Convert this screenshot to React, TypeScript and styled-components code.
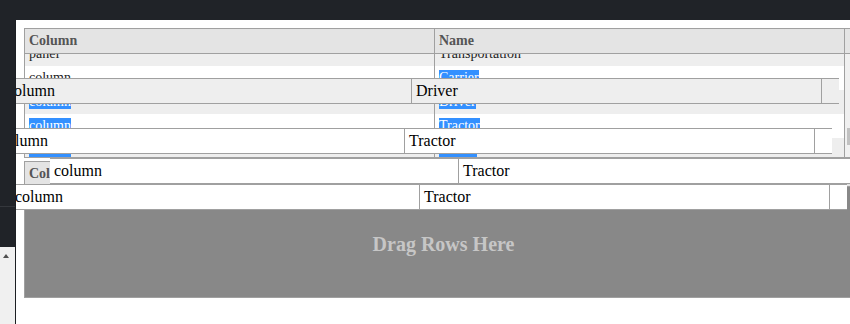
import React from 'react';
import styled, { createGlobalStyle } from 'styled-components';

const GlobalStyle = createGlobalStyle`
  html, body { margin: 0; padding: 0; background: #ffffff; }
  body { font-family: "Liberation Serif", "Times New Roman", serif; }
  * { box-sizing: border-box; }
`;

const Frame = styled.div`
  width: 850px;
  height: 324px;
  display: flex;
  flex-direction: column;
  overflow: hidden;
`;

const TopBar = styled.div`
  height: 20px;
  flex: none;
  background: #202328;
`;

const Main = styled.div`
  flex: 1;
  display: flex;
  min-height: 0;
`;

const Sidebar = styled.div`
  width: 16px;
  flex: none;
  display: flex;
  flex-direction: column;
  border-right: 1px solid #1c1f23;
`;

const SidebarDark = styled.div<{ $h: number }>`
  height: ${(p) => p.$h}px;
  flex: none;
  background: #202328;
`;

const SidebarRule = styled.div`
  height: 1px;
  flex: none;
  background: #34373c;
`;

const SidebarLight = styled.div`
  flex: 1;
  background: #f0f0f0;
  padding: 7px 0 0 3px;
`;

const UpArrow = styled.div`
  width: 0;
  height: 0;
  border-left: 3.5px solid transparent;
  border-right: 3.5px solid transparent;
  border-bottom: 4px solid #505050;
`;

const Content = styled.div`
  flex: 1;
  position: relative;
  overflow: hidden;
  background: #ffffff;
  padding: 8px;
  display: flex;
  flex-direction: column;
  align-items: flex-start;
`;

const Grid = styled.div<{ $gap?: number }>`
  width: 839px;
  flex: none;
  border: 1px solid #a0a0a0;
  margin-top: ${(p) => p.$gap ?? 0}px;
  display: flex;
  flex-direction: column;
`;

const HeaderRow = styled.div`
  display: flex;
  height: 25px;
  flex: none;
  background: #e4e4e4;
  border-bottom: 1px solid #a0a0a0;
`;

const HeaderCell = styled.div<{ $w: number; $last?: boolean }>`
  width: ${(p) => p.$w}px;
  flex: none;
  border-right: ${(p) => (p.$last ? 'none' : '1px solid #a0a0a0')};
  padding-left: 4px;
  font-weight: bold;
  font-size: 14px;
  line-height: 24px;
  color: #555555;
  white-space: nowrap;
  overflow: hidden;
`;

const GridBody = styled.div`
  height: 103px;
  display: flex;
  overflow: hidden;
`;

const RowsViewport = styled.div`
  width: 820px;
  flex: none;
  overflow: hidden;
`;

const RowsScroller = styled.div`
  margin-top: -12px;
`;

const Row = styled.div<{ $alt: boolean }>`
  display: flex;
  height: 24px;
  background: ${(p) => (p.$alt ? '#eeeeee' : '#ffffff')};
`;

const Cell = styled.div`
  width: 410px;
  flex: none;
  border-right: 1px solid #a0a0a0;
  padding-left: 4px;
  font-size: 14px;
  line-height: 24px;
  color: #222222;
  white-space: nowrap;
  overflow: hidden;
`;

const Selected = styled.span`
  background: #3390ff;
  color: #ffffff;
`;

const Scrollbar = styled.div`
  width: 17px;
  flex: none;
  background: #f0f0f0;
  padding: 74px 0 0 2px;
`;

const Thumb = styled.div`
  width: 13px;
  height: 17px;
  background: #c1c1c1;
`;

const DropZone = styled.div`
  height: 110px;
  background: #888888;
  display: flex;
  align-items: center;
  justify-content: center;
  padding-top: 4px;
  font-weight: bold;
  font-size: 20px;
  color: #c6c6c6;
`;

const GhostRow = styled.div<{ $x: number; $y: number; $alt?: boolean }>`
  position: absolute;
  left: ${(p) => p.$x}px;
  top: ${(p) => p.$y}px;
  display: flex;
  height: 26px;
  border-top: 1px solid #a0a0a0;
  border-bottom: 1px solid #a0a0a0;
  background: ${(p) => (p.$alt ? '#eeeeee' : '#ffffff')};
  z-index: 2;
`;

const GhostCell = styled.div<{ $w: number; $last?: boolean }>`
  width: ${(p) => p.$w}px;
  flex: none;
  border-right: ${(p) => (p.$last ? 'none' : '1px solid #a0a0a0')};
  padding-left: 4px;
  font-size: 16px;
  line-height: 24px;
  color: #000000;
  white-space: nowrap;
  overflow: hidden;
`;

type GridRow = { col: string; name: string; selCol: boolean; selName: boolean };

const rows: GridRow[] = [
  { col: 'panel', name: 'Transportation', selCol: false, selName: false },
  { col: 'column', name: 'Carrier', selCol: false, selName: true },
  { col: 'column', name: 'Driver', selCol: true, selName: true },
  { col: 'column', name: 'Tractor', selCol: true, selName: true },
  { col: 'column', name: 'Trailer', selCol: true, selName: true },
];

type Ghost = { x: number; y: number; alt: boolean; name: string };

// drag ghosts, positioned where the pointer left them (content-area coordinates)
const ghosts: Ghost[] = [
  { x: -13, y: 58, alt: true, name: 'Driver' },
  { x: -20, y: 108, alt: false, name: 'Tractor' },
  { x: 34, y: 138, alt: false, name: 'Tractor' },
  { x: -5, y: 164, alt: false, name: 'Tractor' },
];

const Text = ({ children, sel }: { children: string; sel: boolean }) =>
  sel ? <Selected>{children}</Selected> : <>{children}</>;

export default function App() {
  return (
    <>
      <GlobalStyle />
      <Frame>
        <TopBar />
        <Main>
          <Sidebar>
            <SidebarDark $h={186} />
            <SidebarRule />
            <SidebarDark $h={40} />
            <SidebarLight>
              <UpArrow />
            </SidebarLight>
          </Sidebar>
          <Content>
            <Grid>
              <HeaderRow>
                <HeaderCell $w={410}>Column</HeaderCell>
                <HeaderCell $w={410}>Name</HeaderCell>
                <HeaderCell $w={17} $last />
              </HeaderRow>
              <GridBody>
                <RowsViewport>
                  <RowsScroller>
                    {rows.map((r, i) => (
                      <Row key={i} $alt={i % 2 === 0}>
                        <Cell>
                          <Text sel={r.selCol}>{r.col}</Text>
                        </Cell>
                        <Cell>
                          <Text sel={r.selName}>{r.name}</Text>
                        </Cell>
                      </Row>
                    ))}
                  </RowsScroller>
                </RowsViewport>
                <Scrollbar>
                  <Thumb />
                </Scrollbar>
              </GridBody>
            </Grid>
            <Grid $gap={3}>
              <HeaderRow>
                <HeaderCell $w={410}>Column</HeaderCell>
                <HeaderCell $w={410}>Name</HeaderCell>
                <HeaderCell $w={17} $last />
              </HeaderRow>
              <DropZone>Drag Rows Here</DropZone>
            </Grid>
            {ghosts.map((g, i) => (
              <GhostRow key={i} $x={g.x} $y={g.y} $alt={g.alt}>
                <GhostCell $w={409}>column</GhostCell>
                <GhostCell $w={410}>{g.name}</GhostCell>
                <GhostCell $w={17} $last />
              </GhostRow>
            ))}
          </Content>
        </Main>
      </Frame>
    </>
  );
}
